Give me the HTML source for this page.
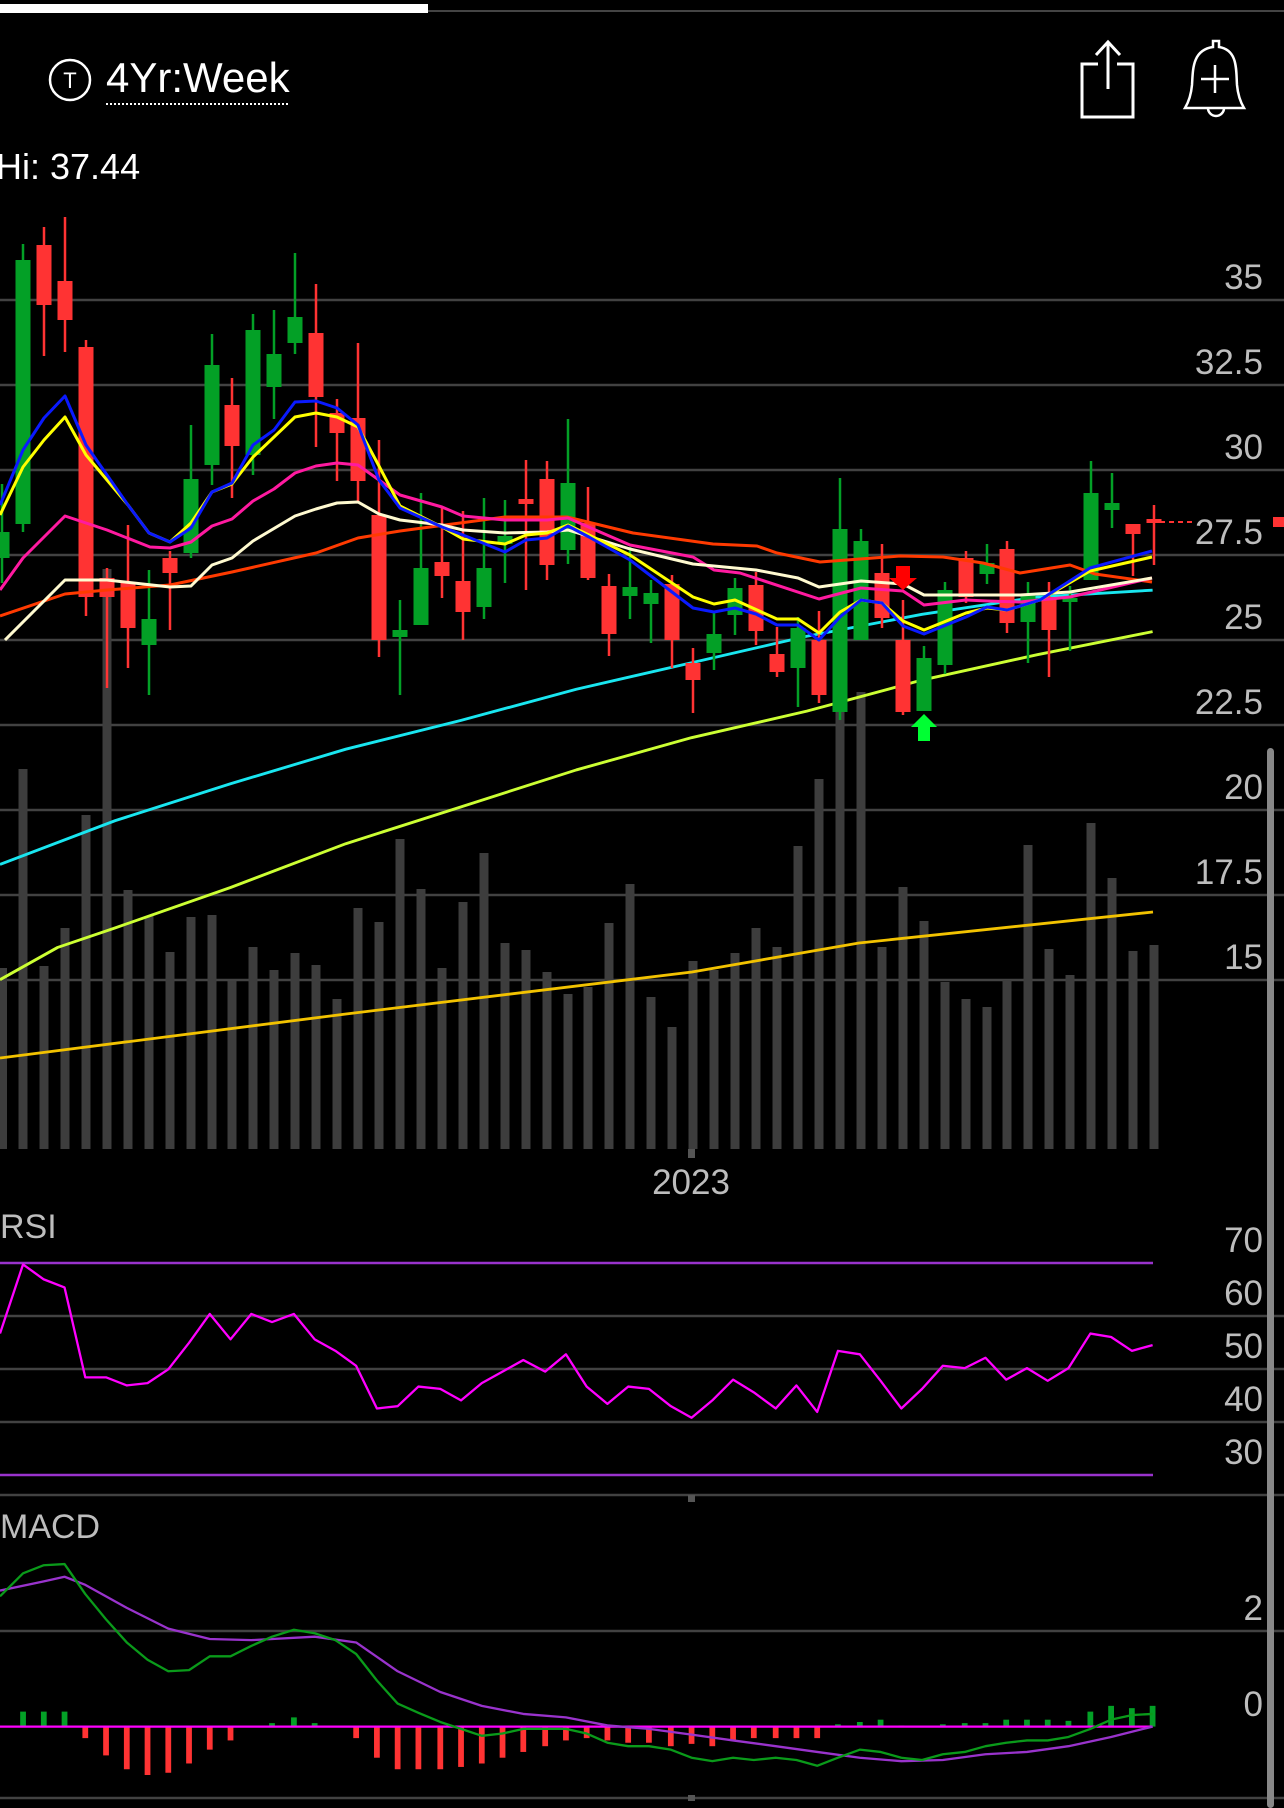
<!DOCTYPE html>
<html><head><meta charset="utf-8"><style>
html,body{margin:0;padding:0;background:#000;width:1284px;height:1808px;overflow:hidden}
svg{display:block}
text{font-family:"Liberation Sans",sans-serif}
</style></head><body>
<svg width="1284" height="1808" viewBox="0 0 1284 1808" xmlns="http://www.w3.org/2000/svg">
<rect width="1284" height="1808" fill="#000"/>
<rect x="0" y="4" width="428" height="9" fill="#fff"/>
<rect x="428" y="10" width="856" height="2" fill="#444"/>
<circle cx="70" cy="80" r="20" fill="none" stroke="#fff" stroke-width="2.5"/>
<text x="70" y="88" font-size="22" fill="#fff" text-anchor="middle">T</text>
<text x="106" y="92" font-size="42" fill="#fff">4Yr:Week</text>
<line x1="106" y1="104" x2="288" y2="104" stroke="#fff" stroke-width="2" stroke-dasharray="2 2"/>
<text x="-4" y="179" font-size="36" fill="#fff">Hi: 37.44</text>
<path d="M1098 64H1082V117H1133V64H1117" fill="none" stroke="#fff" stroke-width="3"/>
<path d="M1108 89V42M1096 55L1108 42L1120 55" fill="none" stroke="#fff" stroke-width="3"/>
<path d="M1213 47V41H1219V47C1238 50 1236 70 1237 85C1238 96 1241 103 1244 108H1185C1188 103 1191 96 1192 85C1193 70 1192 50 1213 47Z" fill="none" stroke="#fff" stroke-width="2.5"/>
<path d="M1208 108A8 8 0 0 0 1224 108" fill="none" stroke="#fff" stroke-width="2.5"/>
<path d="M1201 79H1229M1215 65V93" stroke="#fff" stroke-width="2.5"/>

<g stroke="#424242" stroke-width="2.5">
<line x1="0" y1="300" x2="1284" y2="300"/><line x1="0" y1="385" x2="1284" y2="385"/>
<line x1="0" y1="470" x2="1284" y2="470"/><line x1="0" y1="555" x2="1284" y2="555"/>
<line x1="0" y1="640" x2="1284" y2="640"/><line x1="0" y1="725" x2="1284" y2="725"/>
<line x1="0" y1="810" x2="1284" y2="810"/><line x1="0" y1="895" x2="1284" y2="895"/>
<line x1="0" y1="980" x2="1284" y2="980"/>
<line x1="0" y1="1316" x2="1284" y2="1316"/><line x1="0" y1="1369" x2="1284" y2="1369"/><line x1="0" y1="1422" x2="1284" y2="1422"/>
<line x1="0" y1="1495" x2="1284" y2="1495"/>
<line x1="0" y1="1631" x2="1284" y2="1631"/>
<line x1="0" y1="1798" x2="1284" y2="1798"/>
</g>
<g fill="#bdbdbd" font-size="35" text-anchor="end">
<text x="1263" y="289">35</text><text x="1263" y="374">32.5</text><text x="1263" y="459">30</text>
<text x="1263" y="544">27.5</text><text x="1263" y="629">25</text><text x="1263" y="714">22.5</text>
<text x="1263" y="799">20</text><text x="1263" y="884">17.5</text><text x="1263" y="969">15</text>
<text x="1263" y="1252">70</text><text x="1263" y="1305">60</text><text x="1263" y="1358">50</text>
<text x="1263" y="1411">40</text><text x="1263" y="1464">30</text>
<text x="1263" y="1620">2</text><text x="1263" y="1716">0</text>
</g>
<text x="691" y="1194" font-size="35" fill="#bdbdbd" text-anchor="middle">2023</text>
<text x="0" y="1238" font-size="34" fill="#bdbdbd">RSI</text>
<text x="0" y="1538" font-size="34" fill="#bdbdbd">MACD</text>
<rect x="688" y="1149" width="7" height="9" fill="#555"/>
<rect x="688" y="1495" width="7" height="7" fill="#555"/>
<rect x="688" y="1795" width="7" height="6" fill="#555"/>
<rect x="1267" y="748" width="7" height="1060" rx="3.5" fill="#888"/>

<g fill="#3d3d3d">
<rect x="-2" y="968" width="9" height="181"/><rect x="18.5" y="769" width="9" height="380"/><rect x="39.5" y="966" width="9" height="183"/><rect x="60.5" y="928" width="9" height="221"/><rect x="81.5" y="815" width="9" height="334"/><rect x="102.5" y="569" width="9" height="580"/><rect x="123.5" y="890" width="9" height="259"/><rect x="144.5" y="916" width="9" height="233"/><rect x="165.5" y="952" width="9" height="197"/><rect x="186.5" y="917" width="9" height="232"/><rect x="207.5" y="915" width="9" height="234"/><rect x="227.5" y="981" width="9" height="168"/><rect x="248.5" y="947" width="9" height="202"/><rect x="269.5" y="970" width="9" height="179"/><rect x="290.5" y="953" width="9" height="196"/><rect x="311.5" y="965" width="9" height="184"/><rect x="332.5" y="999" width="9" height="150"/><rect x="353.5" y="908" width="9" height="241"/><rect x="374.5" y="922" width="9" height="227"/><rect x="395.5" y="839" width="9" height="310"/><rect x="416.5" y="889" width="9" height="260"/><rect x="437.5" y="968" width="9" height="181"/><rect x="458.5" y="902" width="9" height="247"/><rect x="479.5" y="853" width="9" height="296"/><rect x="500.5" y="943" width="9" height="206"/><rect x="521.5" y="950" width="9" height="199"/><rect x="542.5" y="972" width="9" height="177"/><rect x="563.5" y="994" width="9" height="155"/><rect x="583.5" y="987" width="9" height="162"/><rect x="604.5" y="923" width="9" height="226"/><rect x="625.5" y="884" width="9" height="265"/><rect x="646.5" y="997" width="9" height="152"/><rect x="667.5" y="1027" width="9" height="122"/><rect x="688.5" y="961" width="9" height="188"/><rect x="709.5" y="970" width="9" height="179"/><rect x="730.5" y="953" width="9" height="196"/><rect x="751.5" y="928" width="9" height="221"/><rect x="772.5" y="947" width="9" height="202"/><rect x="793.5" y="846" width="9" height="303"/><rect x="814.5" y="779" width="9" height="370"/><rect x="835.5" y="692" width="9" height="457"/><rect x="856.5" y="692" width="9" height="457"/><rect x="877.5" y="947" width="9" height="202"/><rect x="898.5" y="887" width="9" height="262"/><rect x="919.5" y="921" width="9" height="228"/><rect x="940.5" y="982" width="9" height="167"/><rect x="961.5" y="999" width="9" height="150"/><rect x="982.5" y="1007" width="9" height="142"/><rect x="1002.5" y="980" width="9" height="169"/><rect x="1023.5" y="845" width="9" height="304"/><rect x="1044.5" y="949" width="9" height="200"/><rect x="1065.5" y="975" width="9" height="174"/><rect x="1086.5" y="823" width="9" height="326"/><rect x="1107.5" y="878" width="9" height="271"/><rect x="1128.5" y="951" width="9" height="198"/><rect x="1149.5" y="945" width="9" height="204"/>
</g>
<polyline fill="none" stroke="#f2c200" stroke-width="2.8" points="0,1058 346,1014 692,972 859,943 1153,912"/>

<g transform="scale(1.1526)" fill="none" stroke-width="2.5" stroke-linejoin="round">
<polyline stroke="#19e6f0" points="0,750 100,712 200,680 300,650 400,625 500,598 600,575 700,552 800,533 900,518 1000,512"/>
<polyline stroke="#ccff33" points="0,850 50,822 100,805 200,770 300,732 400,700 500,668 600,640 700,617 800,590 900,568 1000,548"/>
</g>
<g>
<g stroke-width="2.5">
<line x1="2" y1="484" x2="2" y2="583" stroke="#03a026"/><line x1="23" y1="244" x2="23" y2="532" stroke="#03a026"/><line x1="44" y1="227" x2="44" y2="356" stroke="#ff3333"/><line x1="65" y1="217" x2="65" y2="352" stroke="#ff3333"/><line x1="86" y1="340" x2="86" y2="616" stroke="#ff3333"/><line x1="107" y1="568" x2="107" y2="688" stroke="#ff3333"/><line x1="128" y1="525" x2="128" y2="668" stroke="#ff3333"/><line x1="149" y1="570" x2="149" y2="695" stroke="#03a026"/><line x1="170" y1="551" x2="170" y2="630" stroke="#ff3333"/><line x1="191" y1="425" x2="191" y2="558" stroke="#03a026"/><line x1="212" y1="334" x2="212" y2="485" stroke="#03a026"/><line x1="232" y1="378" x2="232" y2="498" stroke="#ff3333"/><line x1="253" y1="314" x2="253" y2="475" stroke="#03a026"/><line x1="274" y1="310" x2="274" y2="419" stroke="#03a026"/><line x1="295" y1="253" x2="295" y2="354" stroke="#03a026"/><line x1="316" y1="284" x2="316" y2="447" stroke="#ff3333"/><line x1="337" y1="399" x2="337" y2="481" stroke="#ff3333"/><line x1="358" y1="343" x2="358" y2="502" stroke="#ff3333"/><line x1="379" y1="440" x2="379" y2="657" stroke="#ff3333"/><line x1="400" y1="600" x2="400" y2="695" stroke="#03a026"/><line x1="421" y1="493" x2="421" y2="625" stroke="#03a026"/><line x1="442" y1="508" x2="442" y2="598" stroke="#ff3333"/><line x1="463" y1="511" x2="463" y2="640" stroke="#ff3333"/><line x1="484" y1="498" x2="484" y2="619" stroke="#03a026"/><line x1="505" y1="500" x2="505" y2="583" stroke="#03a026"/><line x1="526" y1="460" x2="526" y2="590" stroke="#ff3333"/><line x1="547" y1="461" x2="547" y2="580" stroke="#ff3333"/><line x1="568" y1="419" x2="568" y2="564" stroke="#03a026"/><line x1="588" y1="487" x2="588" y2="580" stroke="#ff3333"/><line x1="609" y1="574" x2="609" y2="656" stroke="#ff3333"/><line x1="630" y1="547" x2="630" y2="619" stroke="#03a026"/><line x1="651" y1="580" x2="651" y2="643" stroke="#03a026"/><line x1="672" y1="575" x2="672" y2="668" stroke="#ff3333"/><line x1="693" y1="648" x2="693" y2="713" stroke="#ff3333"/><line x1="714" y1="613" x2="714" y2="670" stroke="#03a026"/><line x1="735" y1="578" x2="735" y2="635" stroke="#03a026"/><line x1="756" y1="572" x2="756" y2="645" stroke="#ff3333"/><line x1="777" y1="627" x2="777" y2="677" stroke="#ff3333"/><line x1="798" y1="617" x2="798" y2="707" stroke="#03a026"/><line x1="819" y1="611" x2="819" y2="703" stroke="#ff3333"/><line x1="840" y1="478" x2="840" y2="720" stroke="#03a026"/><line x1="861" y1="529" x2="861" y2="640" stroke="#03a026"/><line x1="882" y1="544" x2="882" y2="628" stroke="#ff3333"/><line x1="903" y1="600" x2="903" y2="715" stroke="#ff3333"/><line x1="924" y1="646" x2="924" y2="711" stroke="#03a026"/><line x1="945" y1="582" x2="945" y2="674" stroke="#03a026"/><line x1="966" y1="551" x2="966" y2="603" stroke="#ff3333"/><line x1="987" y1="544" x2="987" y2="584" stroke="#03a026"/><line x1="1007" y1="541" x2="1007" y2="633" stroke="#ff3333"/><line x1="1028" y1="582" x2="1028" y2="663" stroke="#03a026"/><line x1="1049" y1="582" x2="1049" y2="677" stroke="#ff3333"/><line x1="1070" y1="586" x2="1070" y2="651" stroke="#03a026"/><line x1="1091" y1="461" x2="1091" y2="580" stroke="#03a026"/><line x1="1112" y1="473" x2="1112" y2="528" stroke="#03a026"/><line x1="1133" y1="524" x2="1133" y2="576" stroke="#ff3333"/><line x1="1154" y1="505" x2="1154" y2="565" stroke="#ff3333"/>
</g>
<g fill="#03a026">
<rect x="-5.5" y="532" width="15" height="26"/><rect x="15.5" y="260" width="15" height="264"/><rect x="141.5" y="619" width="15" height="26"/><rect x="183.5" y="479" width="15" height="74"/><rect x="204.5" y="365" width="15" height="100"/><rect x="245.5" y="330" width="15" height="125"/><rect x="266.5" y="354" width="15" height="33"/><rect x="287.5" y="317" width="15" height="26"/><rect x="392.5" y="630" width="15" height="7"/><rect x="413.5" y="568" width="15" height="57"/><rect x="476.5" y="568" width="15" height="39"/><rect x="497.5" y="536" width="15" height="8"/><rect x="560.5" y="483" width="15" height="67"/><rect x="622.5" y="587" width="15" height="9"/><rect x="643.5" y="593" width="15" height="11"/><rect x="706.5" y="634" width="15" height="19"/><rect x="727.5" y="588" width="15" height="27"/><rect x="790.5" y="628" width="15" height="40"/><rect x="832.5" y="529" width="15" height="183"/><rect x="853.5" y="541" width="15" height="99"/><rect x="916.5" y="658" width="15" height="53"/><rect x="937.5" y="590" width="15" height="75"/><rect x="979.5" y="563" width="15" height="11"/><rect x="1020.5" y="594" width="15" height="28"/><rect x="1062.5" y="598" width="15" height="4"/><rect x="1083.5" y="493" width="15" height="87"/><rect x="1104.5" y="503" width="15" height="7"/>
</g>
<g fill="#ff3333">
<rect x="36.5" y="245" width="15" height="60"/><rect x="57.5" y="281" width="15" height="39"/><rect x="78.5" y="347" width="15" height="250"/><rect x="99.5" y="578" width="15" height="19"/><rect x="120.5" y="582" width="15" height="46"/><rect x="162.5" y="558" width="15" height="15"/><rect x="224.5" y="405" width="15" height="41"/><rect x="308.5" y="333" width="15" height="64"/><rect x="329.5" y="413" width="15" height="20"/><rect x="350.5" y="418" width="15" height="63"/><rect x="371.5" y="515" width="15" height="125"/><rect x="434.5" y="562" width="15" height="14"/><rect x="455.5" y="581" width="15" height="31"/><rect x="518.5" y="499" width="15" height="5"/><rect x="539.5" y="479" width="15" height="86"/><rect x="580.5" y="523" width="15" height="55"/><rect x="601.5" y="586" width="15" height="48"/><rect x="664.5" y="584" width="15" height="56"/><rect x="685.5" y="663" width="15" height="17"/><rect x="748.5" y="585" width="15" height="46"/><rect x="769.5" y="654" width="15" height="18"/><rect x="811.5" y="640" width="15" height="55"/><rect x="874.5" y="573" width="15" height="45"/><rect x="895.5" y="640" width="15" height="72"/><rect x="958.5" y="558" width="15" height="39"/><rect x="999.5" y="549" width="15" height="74"/><rect x="1041.5" y="597" width="15" height="33"/><rect x="1125.5" y="524" width="15" height="10"/><rect x="1146.5" y="519" width="15" height="4"/>
</g>
</g>
<g fill="none" stroke-width="3" stroke-linejoin="round">
<polyline stroke="#ff3a00" points="0,616 65,594 107,590 170,585 232,572 316,553 358,538 400,531 460,523 505,517 567,517 633,533 713,544 757,546 777,553 820,562 900,556 943,557 983,563 1020,573 1070,565 1095,574 1152,582"/>
<polyline stroke="#ff1aa0" points="0,590 23,558 65,516 107,530 150,547 170,548 191,542 212,526 232,519 253,501 274,489 295,473 316,466 337,463 358,465 379,480 400,495 442,507 463,516 505,520 547,520 568,518 600,532 630,545 693,557 714,570 740,573 819,599 861,588 903,591 924,605 966,600 987,601 1020,602 1070,597 1152,578"/>
<polyline stroke="#fffad0" points="5,640 65,580 107,580 170,587 191,586 212,565 232,558 253,541 295,516 316,509 337,503 358,502 379,514 400,520 442,525 463,530 505,533 547,532 568,530 630,549 693,564 756,570 798,578 819,587 861,581 903,584 924,595 966,595 1020,595 1070,592 1152,578"/>
<polyline stroke="#ffff00" points="0,515 23,467 44,440 65,417 86,455 128,505 149,533 170,542 191,523 212,492 232,484 253,457 295,417 316,413 337,417 358,427 379,466 400,506 442,527 463,539 505,544 526,535 547,533 568,525 589,535 630,555 693,597 714,604 735,600 777,619 798,619 819,633 840,612 861,600 882,603 903,621 924,630 966,613 987,608 1007,610 1040,600 1090,571 1152,557"/>
<polyline stroke="#0a1aff" points="0,505 23,450 44,418 65,396 86,445 128,505 149,533 170,542 191,528 212,492 232,483 253,445 274,430 295,402 316,401 337,408 358,425 379,480 400,508 442,527 463,535 505,552 526,540 547,538 568,526 589,537 630,560 693,608 714,612 735,608 756,614 777,625 798,625 819,640 840,617 861,600 882,603 903,626 924,634 966,617 987,607 1007,610 1040,600 1090,568 1152,551"/>
</g>
<line x1="1160" y1="522" x2="1192" y2="522" stroke="#ff3333" stroke-width="2" stroke-dasharray="5 4"/>
<rect x="1273" y="517" width="11" height="10" fill="#ff3333"/>
<path d="M896 566H910V578H917L903 590L889 578H896Z" fill="#ff0000"/>
<path d="M924 714L937 727H930V741H918V727H911Z" fill="#00ff33"/>

<line x1="0" y1="1263" x2="1153" y2="1263" stroke="#9933cc" stroke-width="2.5"/>
<line x1="0" y1="1475" x2="1153" y2="1475" stroke="#9933cc" stroke-width="2.5"/>
<g transform="scale(1.1526)" fill="none" stroke-linejoin="round">
<polyline stroke="#ff00ff" stroke-width="2" points="0,1157 20,1097 38,1110 56,1117 74,1195 92,1195 110,1202 128,1200 146,1188 164,1165 182,1140 200,1162 218,1140 236,1147 255,1140 273,1162 291,1172 309,1185 327,1222 345,1220 363,1203 382,1205 400,1215 418,1200 436,1190 454,1180 473,1190 491,1175 509,1203 527,1218 545,1203 563,1205 582,1220 600,1230 618,1215 636,1197 654,1208 673,1222 691,1202 709,1225 727,1172 746,1175 764,1198 782,1222 800,1205 818,1185 837,1187 855,1178 873,1197 891,1187 909,1198 927,1187 946,1157 964,1160 982,1172 1000,1167"/>
<g stroke-width="5">
<g stroke="#03a026"><line x1="20" y1="1498" x2="20" y2="1485"/><line x1="38" y1="1498" x2="38" y2="1485"/><line x1="56" y1="1498" x2="56" y2="1485"/><line x1="236" y1="1498" x2="236" y2="1495"/><line x1="255" y1="1498" x2="255" y2="1490"/><line x1="273" y1="1498" x2="273" y2="1495"/><line x1="727" y1="1498" x2="727" y2="1496"/><line x1="746" y1="1498" x2="746" y2="1494"/><line x1="764" y1="1498" x2="764" y2="1492"/><line x1="782" y1="1498" x2="782" y2="1497"/><line x1="818" y1="1498" x2="818" y2="1496"/><line x1="837" y1="1498" x2="837" y2="1495"/><line x1="855" y1="1498" x2="855" y2="1495"/><line x1="873" y1="1498" x2="873" y2="1492"/><line x1="891" y1="1498" x2="891" y2="1492"/><line x1="909" y1="1498" x2="909" y2="1492"/><line x1="927" y1="1498" x2="927" y2="1493"/><line x1="946" y1="1498" x2="946" y2="1485"/><line x1="964" y1="1498" x2="964" y2="1480"/><line x1="982" y1="1498" x2="982" y2="1482"/><line x1="1000" y1="1498" x2="1000" y2="1480"/></g>
<g stroke="#ff3333"><line x1="74" y1="1498" x2="74" y2="1508"/><line x1="92" y1="1498" x2="92" y2="1523"/><line x1="110" y1="1498" x2="110" y2="1535"/><line x1="128" y1="1498" x2="128" y2="1540"/><line x1="146" y1="1498" x2="146" y2="1538"/><line x1="164" y1="1498" x2="164" y2="1530"/><line x1="182" y1="1498" x2="182" y2="1518"/><line x1="200" y1="1498" x2="200" y2="1510"/><line x1="309" y1="1498" x2="309" y2="1508"/><line x1="327" y1="1498" x2="327" y2="1525"/><line x1="345" y1="1498" x2="345" y2="1535"/><line x1="363" y1="1498" x2="363" y2="1535"/><line x1="382" y1="1498" x2="382" y2="1535"/><line x1="400" y1="1498" x2="400" y2="1533"/><line x1="418" y1="1498" x2="418" y2="1530"/><line x1="436" y1="1498" x2="436" y2="1525"/><line x1="454" y1="1498" x2="454" y2="1520"/><line x1="473" y1="1498" x2="473" y2="1515"/><line x1="491" y1="1498" x2="491" y2="1510"/><line x1="509" y1="1498" x2="509" y2="1508"/><line x1="527" y1="1498" x2="527" y2="1510"/><line x1="545" y1="1498" x2="545" y2="1512"/><line x1="563" y1="1498" x2="563" y2="1512"/><line x1="582" y1="1498" x2="582" y2="1515"/><line x1="600" y1="1498" x2="600" y2="1513"/><line x1="618" y1="1498" x2="618" y2="1515"/><line x1="636" y1="1498" x2="636" y2="1510"/><line x1="654" y1="1498" x2="654" y2="1508"/><line x1="673" y1="1498" x2="673" y2="1508"/><line x1="691" y1="1498" x2="691" y2="1508"/><line x1="709" y1="1498" x2="709" y2="1508"/></g>
</g>
<line x1="0" y1="1498" x2="1000" y2="1498" stroke="#ff00ff" stroke-width="2"/>
<polyline stroke="#9933cc" stroke-width="2" points="0,1380 38,1372 56,1368 74,1375 110,1395 146,1413 182,1422 218,1423 273,1420 309,1425 345,1450 382,1468 418,1480 454,1487 491,1490 527,1497 563,1500 600,1505 636,1510 673,1515 709,1520 746,1525 782,1528 818,1527 855,1522 891,1520 927,1515 964,1507 1000,1498"/>
<polyline stroke="#0a9a1a" stroke-width="2" points="0,1385 20,1365 38,1358 56,1357 74,1383 92,1405 110,1425 128,1440 146,1450 164,1449 182,1437 200,1437 218,1428 236,1420 255,1414 273,1417 291,1423 309,1435 327,1458 345,1478 363,1486 382,1494 400,1500 418,1506 436,1504 454,1500 473,1500 491,1500 509,1504 527,1512 545,1515 563,1515 582,1518 600,1525 618,1528 636,1525 654,1527 673,1525 691,1527 709,1532 727,1525 746,1518 764,1520 782,1525 800,1527 818,1522 837,1520 855,1515 873,1512 891,1510 909,1510 927,1507 946,1500 964,1492 982,1488 1000,1487"/>
</g>
</svg>
</body></html>
